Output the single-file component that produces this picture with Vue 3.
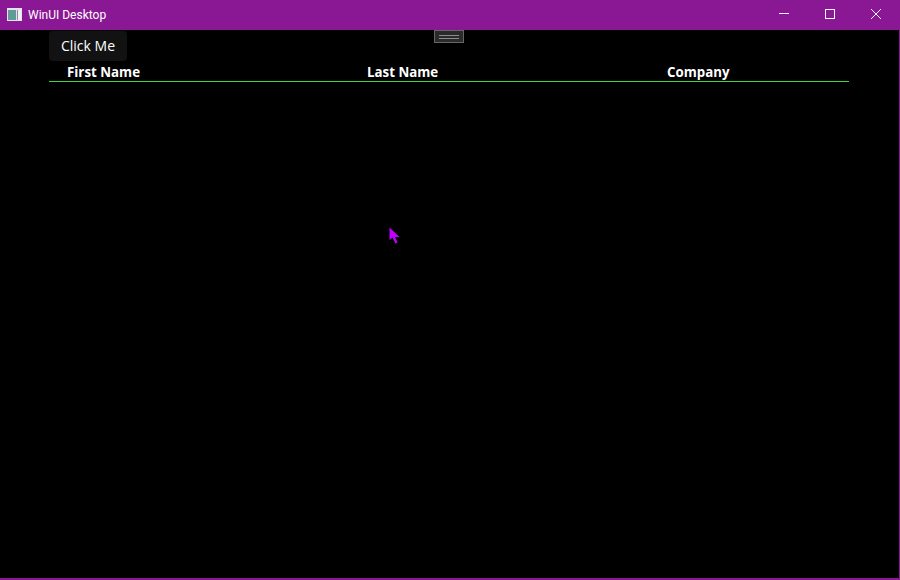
<script setup>
const columns = ['First Name', 'Last Name', 'Company']
</script>

<template>
  <div class="window">
    <header class="titlebar">
      <svg class="app-icon" width="15" height="13" viewBox="0 0 15 13">
        <rect x="0" y="0" width="15" height="13" fill="#e4e4ea" />
        <rect x="1" y="2" width="8" height="10" fill="#5f9c98" />
        <rect x="10" y="2" width="1" height="10" fill="#8a8aa0" />
        <rect x="11" y="2" width="3" height="10" fill="#f2f2f4" />
      </svg>
      <span class="title">WinUI Desktop</span>
      <div class="controls">
        <button class="control" aria-label="Minimize">
          <svg width="10" height="10" viewBox="0 0 10 10"><path d="M0 4.5H10" stroke="#fff" fill="none" /></svg>
        </button>
        <button class="control" aria-label="Maximize">
          <svg width="10" height="10" viewBox="0 0 10 10"><rect x="0.5" y="0.5" width="9" height="9" stroke="#fff" fill="none" /></svg>
        </button>
        <button class="control" aria-label="Close">
          <svg width="10" height="10" viewBox="0 0 10 10"><path d="M0 0L10 10M10 0L0 10" stroke="#fff" fill="none" /></svg>
        </button>
      </div>
    </header>

    <main class="content">
      <button class="action">Click Me</button>
      <div class="grid-header">
        <div v-for="c in columns" :key="c" class="cell">{{ c }}</div>
      </div>
    </main>

    <div class="grip"><span></span></div>

    <svg class="cursor" width="12" height="18" viewBox="0 0 12 18">
      <path d="M0.5 0.5V13L3.5 10.5L6.5 16.5L8.5 15.5L6 10H10.5Z" fill="#c000ff" />
    </svg>
  </div>
</template>

<style scoped>
.window {
  position: relative;
  width: 900px;
  height: 580px;
  box-sizing: border-box;
  display: flex;
  flex-direction: column;
  background: #000;
  border-right: 1px solid #8a1894;
  border-bottom: 2px solid #8a1894;
  font-family: "Open Sans", "Noto Sans", sans-serif;
  color: #fff;
  overflow: hidden;
}
.titlebar {
  flex: none;
  height: 30px;
  display: flex;
  align-items: center;
  background: #8a1894;
  padding-left: 7px;
}
.app-icon { flex: none; margin: 0 6px 1px 0; }
.title { font-family: Roboto, "Open Sans", sans-serif; font-size: 12px; }
.controls { margin-left: auto; display: flex; height: 100%; }
.control {
  width: 46px;
  height: 100%;
  padding: 0 0 2px;
  border: 0;
  background: transparent;
  display: flex;
  align-items: center;
  justify-content: center;
}
.content {
  flex: 1;
  display: flex;
  flex-direction: column;
  align-items: flex-start;
  padding: 1px 50px 0 49px;
}
.action {
  width: 78px;
  height: 30px;
  padding: 0 0 2px;
  border: 0;
  border-radius: 4px;
  background: #121212;
  color: #fff;
  font: 14px "Open Sans", "Noto Sans", sans-serif;
}
.grid-header {
  width: 800px;
  height: 21px;
  display: grid;
  grid-template-columns: repeat(3, 300px);
  border-bottom: 1px solid #3fd63f;
  box-sizing: border-box;
}
.cell {
  padding: 1px 0 0 18px;
  font-size: 13.3px;
  font-weight: 700;
  line-height: 20px;
}
.grip {
  position: absolute;
  left: 434px;
  top: 30px;
  width: 30px;
  height: 13px;
  box-sizing: border-box;
  background: #2b2b2b;
  border: 1px solid #666;
  display: flex;
  align-items: center;
  justify-content: center;
}
.grip span {
  width: 20px;
  height: 2px;
  border-top: 1px solid #8c8c8c;
  border-bottom: 1px solid #8c8c8c;
}
.cursor { position: absolute; left: 389px; top: 227px; }
</style>
